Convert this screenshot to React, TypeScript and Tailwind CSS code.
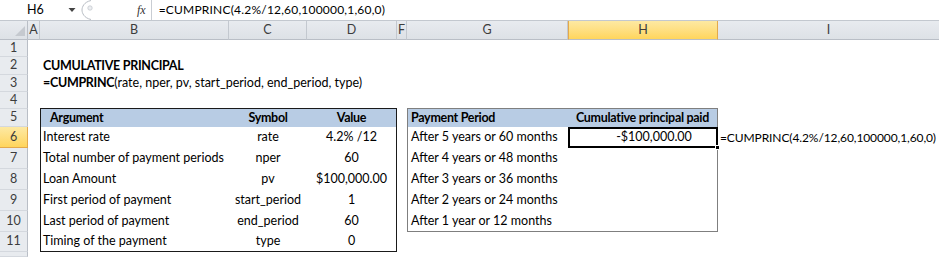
import React from "react";

const font = { fontFamily: "Lato, 'Liberation Sans', sans-serif" };

function ColHead({ label, active, last }: { label: string; active?: boolean; last?: boolean }) {
  return (
    <div
      className={
        "flex items-center justify-center text-[12.5px] text-[#3c3c3c] border-b border-[#b9bec6] " +
        (active
          ? "bg-gradient-to-b from-[#fde9a2] to-[#ffd55b] border-x border-x-[#e3a94c]"
          : "bg-gradient-to-b from-[#e8ebef] to-[#dde1e6] " + (last ? "" : "border-r border-r-[#c3c8cf]"))
      }
    >
      {label}
    </div>
  );
}

function RowHead({ n, active, hide }: { n: number; active?: boolean; hide?: boolean }) {
  return (
    <div
      className={
        "h-full flex items-center justify-center text-[12.5px] text-[#3c3c3c] border-r border-b " +
        (active
          ? "bg-gradient-to-b from-[#fde9a2] to-[#ffd55b] border-r-[#e3a94c] border-b-[#e3a94c]"
          : "bg-[#e8ebef] border-r-[#b9bec6] border-b-[#d4d8de]")
      }
    >
      {hide ? "" : n}
    </div>
  );
}

export default function App() {
  const left = [
    ["Interest rate", "rate", "4.2% /12"],
    ["Total number of payment periods", "nper", "60"],
    ["Loan Amount", "pv", "$100,000.00"],
    ["First period of payment", "start_period", "1"],
    ["Last period of payment", "end_period", "60"],
    ["Timing of the payment", "type", "0"],
  ];
  const right = [
    "After 5 years or 60 months",
    "After 4 years or 48 months",
    "After 3 years or 36 months",
    "After 2 years or 24 months",
    "After 1 year or 12 months",
  ];
  return (
    <div className="w-[939px] h-[257px] overflow-hidden bg-white text-black" style={font}>
      {/* formula bar */}
      <div className="h-[21px] flex items-center border-b border-[#c3c8cf] bg-white text-[12.5px]">
        <div className="w-[27px]" />
        <div className="w-[40px]">H6</div>
        <svg width="8" height="6" viewBox="0 0 8 6" className="ml-[1px]">
          <path d="M0.5 1 L7.5 1 L4 5 Z" fill="#444" />
        </svg>
        <svg width="20" height="20" viewBox="0 0 20 20" className="ml-[3px]">
          <path d="M12 0.5 C5 2 3 7 3 10 C3 13 5 18 12 19.5" fill="none" stroke="#b8bdc4" strokeWidth="1" />
          <circle cx="11" cy="8" r="2.2" fill="#eceef1" stroke="#c4c8ce" strokeWidth="0.8" />
        </svg>
        <div className="w-[38px]" />
        <div className="flex items-center pr-[5px]">
          <span className="italic text-[12px] text-[#333]" style={{ fontFamily: "'Liberation Serif', serif" }}>
            fx
          </span>
        </div>
        <div className="w-px h-[20px] bg-[#c9cdd3]" />
        <div className="ml-[7px] whitespace-nowrap text-[12px] tracking-[0.2px]">=CUMPRINC(4.2%/12,60,100000,1,60,0)</div>
      </div>

      {/* sheet grid */}
      <div className="grid grid-cols-[28px_12px_189px_78px_90px_10px_161px_150px_221px] grid-rows-[19px_17px_18px_17px_17px_18px_21px_21px_21px_21px_21px_20px_5px] text-[12.5px]">
        {/* corner */}
        <div className="relative bg-gradient-to-b from-[#e8ebef] to-[#dde1e6] border-r border-b border-[#b9bec6]">
          <svg width="10" height="10" viewBox="0 0 10 10" className="absolute right-[2px] bottom-[3px]">
            <path d="M10 0 L10 10 L0 10 Z" fill="#c5c9cf" />
          </svg>
        </div>
        <ColHead label="A" />
        <ColHead label="B" />
        <ColHead label="C" />
        <ColHead label="D" />
        <ColHead label="F" />
        <ColHead label="G" />
        <ColHead label="H" active />
        <ColHead label="I" last />

        {/* row headers */}
        {[1, 2, 3, 4, 5, 6, 7, 8, 9, 10, 11, 12].map((n) => (
          <div key={n} className="col-start-1" style={{ gridRowStart: n + 1 }}>
            <RowHead n={n} active={n === 6} hide={n === 12} />
          </div>
        ))}

        {/* title rows */}
        <div className="col-start-3 col-span-4 row-start-3 flex items-center pl-[3px] font-bold tracking-[-0.3px]">
          CUMULATIVE PRINCIPAL
        </div>
        <div className="col-start-3 col-span-4 row-start-4 flex items-center pl-[3px] whitespace-nowrap">
          <span className="font-bold tracking-[-0.3px]">=CUMPRINC</span>(rate, nper, pv, start_period, end_period, type)
        </div>

        {/* left table */}
        <div className="col-start-3 col-span-3 row-start-6 row-span-7 -mt-px border border-[#1a1a1a] grid grid-cols-[188px_78px_89px] grid-rows-[18px_21px_21px_21px_21px_21px_19px]">
          <div className="bg-[#b8cce4] font-bold tracking-[-0.3px] pl-[9px] flex items-center">Argument</div>
          <div className="bg-[#b8cce4] font-bold tracking-[-0.3px] flex items-center justify-center">Symbol</div>
          <div className="bg-[#b8cce4] font-bold tracking-[-0.3px] flex items-center justify-center">Value</div>
          {left.map((r) => (
            <React.Fragment key={r[0]}>
              <div className="pl-[2px] flex items-center whitespace-nowrap">{r[0]}</div>
              <div className="flex items-center justify-center">{r[1]}</div>
              <div className="flex items-center justify-center">{r[2]}</div>
            </React.Fragment>
          ))}
        </div>

        {/* right table */}
        <div className="col-start-7 col-span-2 row-start-6 row-span-6 -mt-px border border-[#7f7f7f] grid grid-cols-[160px_149px] grid-rows-[18px_21px_21px_21px_21px_20px]">
          <div className="bg-[#b8cce4] font-bold tracking-[-0.3px] pl-[3px] flex items-center">Payment Period</div>
          <div className="bg-[#b8cce4] font-bold tracking-[-0.3px] flex items-center justify-center whitespace-nowrap">
            Cumulative principal paid
          </div>
          {right.map((t, i) => (
            <React.Fragment key={t}>
              <div className="pl-[3px] flex items-center whitespace-nowrap">{t}</div>
              {i === 0 ? (
                <div className="relative -mr-px border-2 border-black flex items-center justify-center pl-[22px]">
                  -$100,000.00
                  <div className="absolute -right-[4px] -bottom-[4px] w-[5px] h-[5px] bg-black border border-white" />
                </div>
              ) : (
                <div />
              )}
            </React.Fragment>
          ))}
        </div>

        {/* I6 formula text */}
        <div className="col-start-9 row-start-7 flex items-center pl-[2px] whitespace-nowrap text-[12px] tracking-[-0.1px]">
          =CUMPRINC(4.2%/12,60,100000,1,60,0)
        </div>
      </div>
    </div>
  );
}
